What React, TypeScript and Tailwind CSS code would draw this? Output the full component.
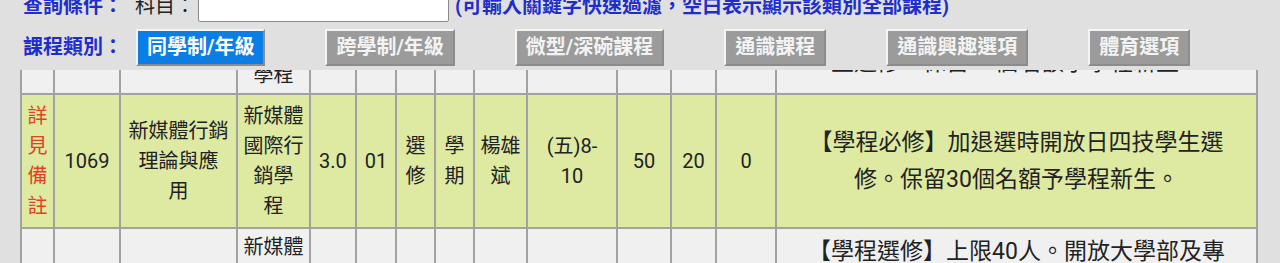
import type { ReactNode } from 'react';

type Row = {
  tone: 'plain' | 'green';
  note?: string[];
  code?: string;
  name?: string[];
  program?: string[];
  credit?: string;
  cls?: string;
  kind?: string[];
  term?: string[];
  teacher?: string[];
  time?: string[];
  limit?: string;
  taken?: string;
  left?: string;
  remark: string[];
  remarkClass?: string;
};

const rows: Row[] = [
  {
    tone: 'plain',
    code: '1068',
    name: ['新媒體行銷', '專題'],
    program: ['新媒體', '國際行', '銷', '學程'],
    credit: '3.0',
    cls: '01',
    kind: ['選', '修'],
    term: ['學', '期'],
    teacher: ['楊雄', '斌'],
    time: ['(四)5-', '7'],
    limit: '50',
    taken: '18',
    left: '0',
    remark: ['【學程選修】加退選時開放日四技學生選', '修，並開放進修部學生選修，人數上限', '生選修。保留20個名額予學程新生。'],
    remarkClass: 'pb-[12px]',
  },
  {
    tone: 'green',
    note: ['詳', '見', '備', '註'],
    code: '1069',
    name: ['新媒體行銷', '理論與應', '用'],
    program: ['新媒體', '國際行', '銷學', '程'],
    credit: '3.0',
    cls: '01',
    kind: ['選', '修'],
    term: ['學', '期'],
    teacher: ['楊雄', '斌'],
    time: ['(五)8-', '10'],
    limit: '50',
    taken: '20',
    left: '0',
    remark: ['【學程必修】加退選時開放日四技學生選', '修。保留30個名額予學程新生。'],
  },
  {
    tone: 'plain',
    program: ['新媒體', '國際行', '銷', '學程', ''],
    remark: ['【學程選修】上限40人。開放大學部及專', '科部學生選修，加退選時開放日四技', '學生選修。', ''],
  },
];

const tabs = ['同學制/年級', '跨學制/年級', '微型/深碗課程', '通識課程', '通識興趣選項', '體育選項'];

const Lines = ({ lines }: { lines?: string[] }) => (
  <>
    {(lines ?? []).map((l, i) => (
      <div key={i} className="h-[30px]">{l}</div>
    ))}
  </>
);

const Cell = ({ children, green, className = '' }: { children?: ReactNode; green?: boolean; className?: string }) => (
  <td
    className={`border-2 border-[#a2a2a2] px-[2px] text-center align-middle leading-[30px] ${
      green ? 'py-[6px]' : 'py-[3px]'
    } ${className}`}
  >
    {children}
  </td>
);

export default function App() {
  return (
    <div className="h-[263px] w-[1280px] overflow-hidden bg-[#e0e0e0] font-['Roboto','Noto_Sans_CJK_TC',sans-serif] text-[20px] text-[#222]">
      {/* sticky search bar */}
      <div className="relative z-10 -mt-[12px] bg-[#e0e0e0] pl-[23px]">
        <div className="flex h-[36px] items-center">
          <span className="font-bold text-[#1e2ecb]">查詢條件：</span>
          <span className="ml-[12px]">科目：</span>
          <input className="ml-[3px] h-[31px] w-[251px] rounded-[2px] border border-[#8a8a8a] bg-white" />
          <span className="ml-[6px] font-bold text-[#1e2ecb]">(可輸入關鍵字快速過濾，空白表示顯示該類別全部課程)</span>
        </div>
        <div className="flex h-[46px] items-center">
          <span className="font-bold text-[#1e2ecb]">課程類別：</span>
          <div className="ml-[13px] flex gap-[60px]">
            {tabs.map((t, i) => (
              <button
                key={t}
                className={`h-[37px] border-2 border-t-[#f4f4f4] border-l-[#f4f4f4] border-r-[#8c8c8c] border-b-[#8c8c8c] px-[9px] font-bold leading-[33px] ${
                  i === 0 ? 'bg-[#0b7ee6] text-white' : 'bg-[#9b9b9b] text-[#f3f3f3]'
                }`}
              >
                {t}
              </button>
            ))}
          </div>
        </div>
      </div>

      {/* course table, scrolled */}
      <div className="h-[193px] overflow-hidden pl-[20px]">
        <table className="-mt-[105px] w-[1238px] table-fixed border-collapse">
          <colgroup>
            <col className="w-[33px]" />
            <col className="w-[66px]" />
            <col className="w-[117px]" />
            <col className="w-[73px]" />
            <col className="w-[46px]" />
            <col className="w-[40px]" />
            <col className="w-[39px]" />
            <col className="w-[39px]" />
            <col className="w-[53px]" />
            <col className="w-[90px]" />
            <col className="w-[54px]" />
            <col className="w-[45px]" />
            <col className="w-[60px]" />
            <col className="w-[481px]" />
          </colgroup>
          <tbody>
            {rows.map((r, i) => {
              const g = r.tone === 'green';
              return (
                <tr key={i} className={g ? 'bg-[#dee9a2]' : 'bg-[#f0f0f0]'}>
                  <Cell green={g} className="text-[#e2431e]"><Lines lines={r.note} /></Cell>
                  <Cell green={g}>{r.code}</Cell>
                  <Cell green={g}><Lines lines={r.name} /></Cell>
                  <Cell green={g}><Lines lines={r.program} /></Cell>
                  <Cell green={g}>{r.credit}</Cell>
                  <Cell green={g}>{r.cls}</Cell>
                  <Cell green={g}><Lines lines={r.kind} /></Cell>
                  <Cell green={g}><Lines lines={r.term} /></Cell>
                  <Cell green={g}><Lines lines={r.teacher} /></Cell>
                  <Cell green={g}><Lines lines={r.time} /></Cell>
                  <Cell green={g}>{r.limit}</Cell>
                  <Cell green={g}>{r.taken}</Cell>
                  <Cell green={g}>{r.left}</Cell>
                  <Cell green={g} className={`text-[23px] leading-[37px] ${r.remarkClass ?? ''}`}>
                    {r.remark.map((l, k) => (
                      <div key={k} className="h-[37px]">{l}</div>
                    ))}
                  </Cell>
                </tr>
              );
            })}
          </tbody>
        </table>
      </div>
    </div>
  );
}
